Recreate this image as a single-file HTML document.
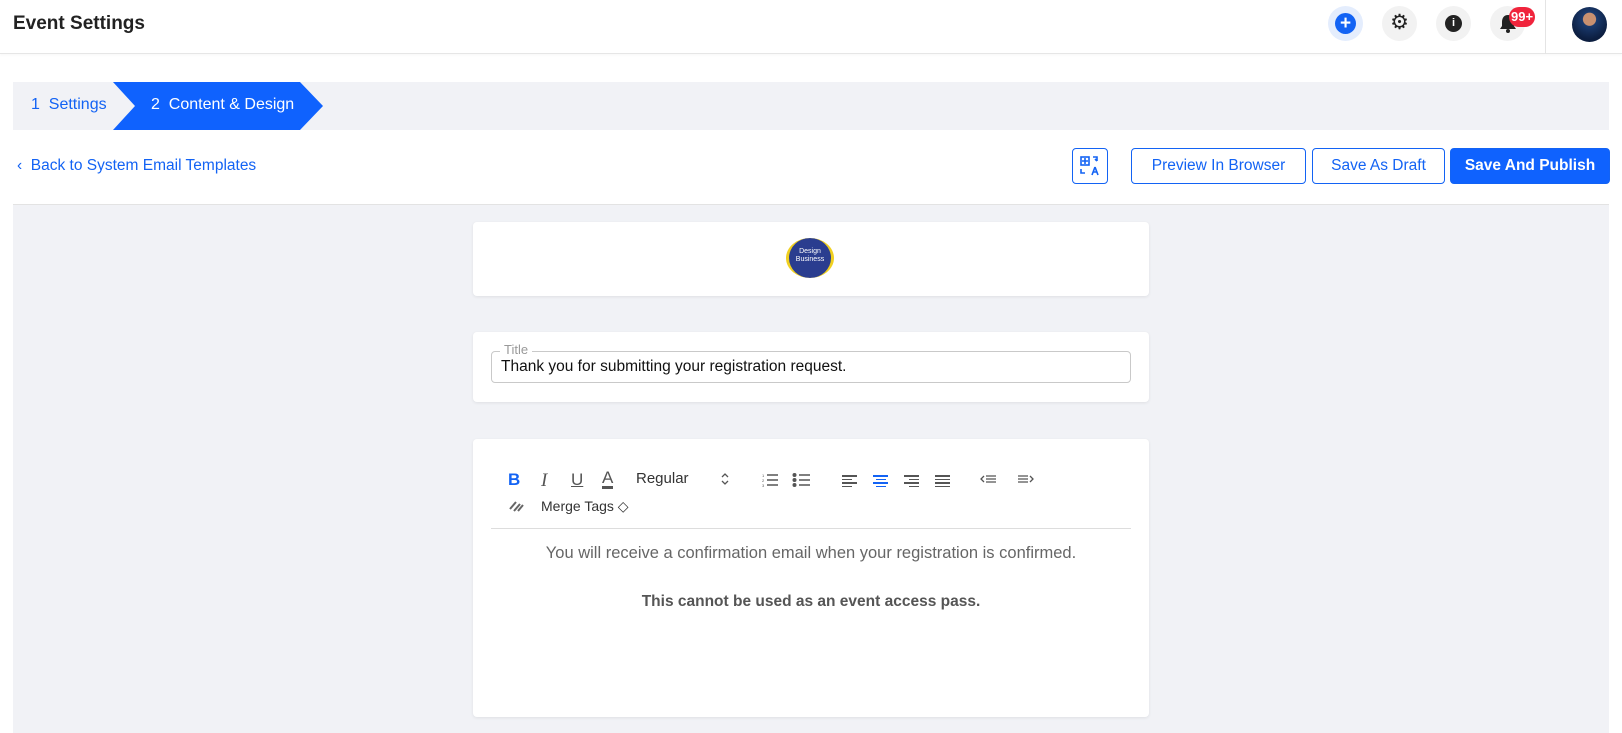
<!DOCTYPE html>
<html><head><meta charset="utf-8"><style>
*{box-sizing:border-box;margin:0;padding:0}
body{width:1622px;height:733px;overflow:hidden;background:#fff;font-family:"Liberation Sans","DejaVu Sans",sans-serif;position:relative;color:#222}
.abs{position:absolute}
.hdr{left:0;top:0;width:1622px;height:54px;border-bottom:1px solid #e6e6e6;box-shadow:0 1px 3px rgba(0,0,0,.04)}
.ic{width:35px;height:35px;border-radius:50%;background:#f2f2f2;top:6px}
.btn{top:148px;height:36px;border:1px solid #1363f4;border-radius:4px;color:#1363f4;font-size:15.5px;display:flex;align-items:center;justify-content:center}
.card{background:#fff;border-radius:4px;box-shadow:0 1px 3px rgba(0,0,0,.08);left:473px;width:676px}
.tb{font-size:14px;color:#333}
.line{display:block;height:1.5px;background:#555;margin:2px 0}
</style></head><body>
<div class="abs hdr"></div>
<div class="abs" style="left:13px;top:13px;font-size:19px;font-weight:bold;color:#222">Event Settings</div>
<div class="abs ic" style="left:1328px;background:#e4edfd"><div style="position:absolute;left:7px;top:7px;width:21px;height:21px;border-radius:50%;background:#1363f4;color:#fff;font-weight:bold;font-size:19px;line-height:21px;text-align:center">+</div></div>
<div class="abs ic" style="left:1382px"><div style="position:absolute;left:7px;top:4px;width:21px;text-align:center;font-size:21px;color:#222">⚙</div></div>
<div class="abs ic" style="left:1436px"><div style="position:absolute;left:9px;top:9px;width:17px;height:17px;border-radius:50%;background:#222;color:#fff;font-weight:bold;font-size:11px;line-height:17px;text-align:center">i</div></div>
<div class="abs ic" style="left:1490px"><svg style="position:absolute;left:9px;top:8px" width="18" height="19" viewBox="0 0 18 19"><path d="M9 1c-4 0-6 3-6 7v4l-2 3h16l-2-3V8c0-4-2-7-6-7z" fill="#222"/><circle cx="9" cy="17" r="2" fill="#222"/></svg></div>
<div class="abs" style="left:1509px;top:7px;height:20px;min-width:22px;padding:0 2px;border-radius:10px;background:#f0243c;color:#fff;font-size:13px;font-weight:bold;line-height:20px">99+</div>
<div class="abs" style="left:1545px;top:0;width:1px;height:54px;background:#e4e4e4"></div>
<div class="abs" style="left:1572px;top:7px;width:35px;height:35px;border-radius:50%;background:radial-gradient(circle at 50% 35%,#c89070 0 22%,#1a3a6e 24%,#0c1e40 70%)"></div>

<div class="abs" style="left:13px;top:82px;width:1596px;height:48px;background:#f1f2f6"></div>
<svg class="abs" style="left:113px;top:82px" width="212" height="48"><polygon points="0,0 187,0 210,24 187,48 0,48 22,24" fill="#0f62fe"/></svg>
<div class="abs" style="left:31px;top:96px;font-size:16px;color:#1363f4">1&nbsp;&nbsp;Settings</div>
<div class="abs" style="left:151px;top:96px;font-size:16px;color:#fff">2&nbsp;&nbsp;Content &amp; Design</div>

<div class="abs" style="left:17px;top:157px;font-size:15.5px;color:#1363f4">‹&nbsp;&nbsp;Back to System Email Templates</div>
<div class="abs btn" style="left:1072px;width:36px;height:36px;top:148px"><svg width="22" height="22" viewBox="0 0 22 22" fill="none" stroke="#1363f4" stroke-width="1.6"><rect x="2" y="2" width="8" height="8"/><path d="M6 3v6M3 6h6M14 2h4v4M18 6l-2-2M2 14v4h4M16 12l-3 8M16 12l3 8M14 17h4"/></svg></div>
<div class="abs btn" style="left:1131px;width:175px">Preview In Browser</div>
<div class="abs btn" style="left:1312px;width:133px">Save As Draft</div>
<div class="abs btn" style="left:1450px;width:160px;background:#0f62fe;color:#fff;font-weight:bold">Save And Publish</div>

<div class="abs" style="left:13px;top:204px;width:1596px;height:529px;background:#f1f2f6;border-top:1px solid #e3e3e3"></div>
<div class="abs card" style="top:222px;height:74px"></div>
<div class="abs" style="left:786px;top:238px;width:48px;height:40px;border-radius:50%;background:#2a3d8f;border-left:3px solid #f0d020;border-right:3px solid #f0d020;color:#fff;font-size:7px;line-height:8px;text-align:center;padding-top:10px">Design<br>Business</div>

<div class="abs card" style="top:332px;height:70px"></div>
<div class="abs" style="left:491px;top:351px;width:640px;height:32px;border:1px solid #c9c9c9;border-radius:4px"></div>
<div class="abs" style="left:500px;top:342px;background:#fff;padding:0 4px;font-size:13px;color:#999">Title</div>
<div class="abs" style="left:501px;top:358px;font-size:15.5px;color:#111">Thank you for submitting your registration request.</div>

<div class="abs card" style="top:439px;height:278px"></div>
<div class="abs tb" style="left:508px;top:470px;font-weight:bold;color:#1363f4;font-size:17px">B</div>
<div class="abs tb" style="left:541px;top:470px;font-style:italic;font-family:'Liberation Serif',serif;font-size:19px;color:#555">I</div>
<div class="abs tb" style="left:571px;top:470px;text-decoration:underline;font-size:17px;color:#555">U</div>
<div class="abs tb" style="left:602px;top:470px;font-size:17px;color:#555;border-bottom:3px solid #555;line-height:16px">A</div>
<div class="abs tb" style="left:636px;top:470px;font-size:15px">Regular</div>
<svg class="abs" style="left:720px;top:472px" width="10" height="14"><path d="M2 5l3-3 3 3M2 9l3 3 3-3" fill="none" stroke="#555" stroke-width="1.3"/></svg>
<svg class="abs" style="left:762px;top:473px" width="16" height="14"><path d="M5 2h11M5 7h11M5 12h11" stroke="#555" stroke-width="1.4"/><text x="0" y="4" font-size="4" fill="#555">1</text><text x="0" y="9" font-size="4" fill="#555">2</text><text x="0" y="14" font-size="4" fill="#555">3</text></svg>
<svg class="abs" style="left:792px;top:473px" width="18" height="14"><circle cx="2.5" cy="2" r="2" fill="#555"/><circle cx="2.5" cy="7" r="2" fill="#555"/><circle cx="2.5" cy="12" r="2" fill="#555"/><path d="M7 2h11M7 7h11M7 12h11" stroke="#555" stroke-width="1.5"/></svg>
<div class="abs" style="left:842px;top:473px;width:15px"><i class="line"></i><i class="line" style="width:10px"></i><i class="line"></i><i class="line" style="width:10px"></i></div>
<div class="abs" style="left:873px;top:473px;width:15px"><i class="line" style="background:#1363f4"></i><i class="line" style="background:#1363f4;width:10px;margin-left:2.5px"></i><i class="line" style="background:#1363f4"></i><i class="line" style="background:#1363f4;width:10px;margin-left:2.5px"></i></div>
<div class="abs" style="left:904px;top:473px;width:15px"><i class="line"></i><i class="line" style="width:10px;margin-left:5px"></i><i class="line"></i><i class="line" style="width:10px;margin-left:5px"></i></div>
<div class="abs" style="left:935px;top:473px;width:15px"><i class="line"></i><i class="line"></i><i class="line"></i><i class="line"></i></div>
<svg class="abs" style="left:980px;top:474px" width="16" height="10"><path d="M6 5h10M6 2h10M6 8h10M4 2L1 5l3 3" fill="none" stroke="#555" stroke-width="1.3"/></svg>
<svg class="abs" style="left:1018px;top:474px" width="16" height="10"><path d="M0 5h10M0 2h10M0 8h10M12 2l3 3-3 3" fill="none" stroke="#555" stroke-width="1.3"/></svg>
<svg class="abs" style="left:508px;top:499px" width="16" height="14"><path d="M2 10l6-7M6 12l6-7M10 12l5-6" stroke="#666" stroke-width="2"/></svg>
<div class="abs tb" style="left:541px;top:498px">Merge Tags ◇</div>
<div class="abs" style="left:491px;top:528px;width:640px;height:1px;background:#ddd"></div>
<div class="abs" style="left:473px;top:544px;width:676px;text-align:center;font-size:16.5px;color:#666">You will receive a confirmation email when your registration is confirmed.</div>
<div class="abs" style="left:473px;top:593px;width:676px;text-align:center;font-size:15.5px;color:#555;font-weight:bold">This cannot be used as an event access pass.</div>
</body></html>
